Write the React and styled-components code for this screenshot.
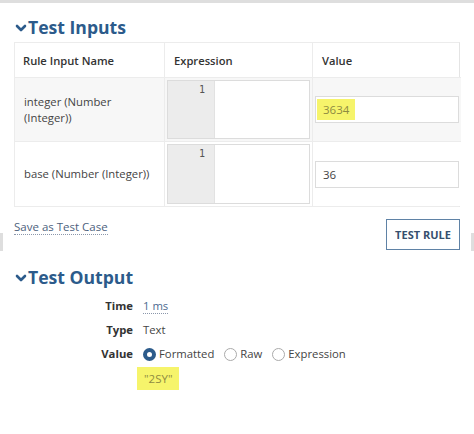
import React from "react"
import styled, { createGlobalStyle } from "styled-components"

const GlobalStyle = createGlobalStyle`
  html, body {
    margin: 0;
    padding: 0;
    background: #fff;
  }
  body {
    font-family: "Open Sans", "Liberation Sans", sans-serif;
    color: #333;
    width: 474px;
    height: 434px;
    overflow: hidden;
  }
`

const Page = styled.div`
  width: 474px;
  height: 434px;
  border-top: 3px solid #dedede;
  box-sizing: border-box;
  padding: 0 14px;
`

const SectionTitle = styled.h2`
  display: flex;
  align-items: center;
  gap: 1px;
  margin: 0;
  padding: ${(p) => p.$pad};
  font-size: 17.6px;
  font-weight: 700;
  color: #2c5b8b;
  line-height: 24px;
`

const Chevron = () => (
  <svg width="12" height="10" viewBox="0 0 12 10" style={{ marginTop: 2 }}>
    <polyline points="2,3 6,7 10,3" fill="none" stroke="#2c5b8b" strokeWidth="2.6" strokeLinecap="round" strokeLinejoin="round" />
  </svg>
)

const Table = styled.div`
  display: grid;
  grid-template-columns: 149px 148px 149px;
  border: 1px solid #ececec;
  border-right: 1px solid #e4e4e4;
  margin-top: 3px;
`

const HeadCell = styled.div`
  height: 34px;
  display: flex;
  align-items: center;
  padding-left: ${(p) => (p.$first ? "8px" : "9px")};
  font-size: 11.2px;
  font-weight: 600;
  color: #333;
  border-left: ${(p) => (p.$first ? "none" : "1px solid #ececec")};
  border-bottom: 1px solid #ececec;
`

const Cell = styled.div`
  height: 64px;
  box-sizing: border-box;
  display: flex;
  align-items: center;
  padding: 2px;
  background: ${(p) => (p.$shade ? "#f7f7f7" : "#fff")};
  border-left: ${(p) => (p.$first ? "none" : "1px solid #ececec")};
  border-bottom: ${(p) => (p.$last ? "none" : "1px solid #ececec")};
`

const NameText = styled.div`
  padding-left: 7px;
  font-size: 11.3px;
  line-height: 16px;
  color: #444;
`

const Editor = styled.div`
  flex: 1;
  align-self: stretch;
  display: flex;
  border: 1px solid #dcdcdc;
  background: #fff;
`

const Gutter = styled.div`
  width: 47px;
  background: #ececec;
  border-right: 1px solid #e2e2e2;
  font-family: "DejaVu Sans Mono", monospace;
  font-size: 10px;
  color: #555;
  text-align: right;
  padding: 3px 9px 0 0;
  box-sizing: border-box;
`

const ValueInput = styled.div`
  flex: 1;
  height: 27px;
  box-sizing: border-box;
  border: 1px solid #dcdcdc;
  background: #fff;
  display: flex;
  align-items: center;
  padding-left: ${(p) => p.$pad || "7px"};
  font-size: 11.5px;
  color: #444;
`

const Marker = styled.span`
  display: inline-flex;
  align-items: center;
  background: #f6f46b;
  color: #8f8b42;
  padding: ${(p) => p.$pad};
  font-size: 11.5px;
`

const Actions = styled.div`
  position: relative;
  display: flex;
  justify-content: space-between;
  align-items: flex-start;
  margin-top: 12px;
  height: 32px;
  &::before,
  &::after {
    content: "";
    position: absolute;
    top: 14px;
    width: 3px;
    height: 18px;
    background: #dedede;
  }
  &::before {
    left: -14px;
  }
  &::after {
    right: -14px;
  }
`

const SaveLink = styled.a`
  font-size: 11.5px;
  color: #4d5f7d;
  text-decoration: none;
  border-bottom: 1px dotted #8b97ab;
  line-height: 15px;
`

const TestButton = styled.button`
  width: 74px;
  height: 31px;
  border: 1px solid #5f82a6;
  background: #fff;
  font-family: "Open Sans", "Liberation Sans", sans-serif;
  font-size: 11px;
  font-weight: 700;
  color: #36506e;
  padding: 0;
`

const OutputGrid = styled.div`
  display: grid;
  grid-template-columns: 119px auto;
  column-gap: 10px;
  row-gap: 6px;
  margin-top: 8px;
  font-size: 11.3px;
  line-height: 18px;
`

const Label = styled.div`
  text-align: right;
  font-weight: 700;
  color: #333;
`

const Value = styled.div`
  display: flex;
  align-items: center;
  color: #444;
`

const TimeLink = styled.span`
  color: #4d6a90;
  border-bottom: 1px dotted #8b97ab;
  line-height: 15px;
`

const Radio = styled.span`
  display: inline-flex;
  align-items: center;
  gap: 3px;
  margin-right: 10px;
  color: #444;
  &::before {
    content: "";
    width: 13px;
    height: 13px;
    box-sizing: border-box;
    border-radius: 50%;
    border: ${(p) => (p.$on ? "4px solid #2c5b8b" : "1px solid #aaa")};
    background: #fff;
  }
`

const ResultRow = styled.div`
  padding: 3px 0 0 123px;
`

const App = () => {
  return (
    <>
      <GlobalStyle />
      <Page>
        <SectionTitle $pad="12px 0 0 1px">
          <Chevron />
          Test Inputs
        </SectionTitle>
        <Table>
          <HeadCell $first>Rule Input Name</HeadCell>
          <HeadCell>Expression</HeadCell>
          <HeadCell>Value</HeadCell>

          <Cell $first $shade>
            <NameText>
              integer (Number
              <br />
              (Integer))
            </NameText>
          </Cell>
          <Cell $shade>
            <Editor>
              <Gutter>1</Gutter>
            </Editor>
          </Cell>
          <Cell $shade>
            <ValueInput $pad="1px">
              <Marker $pad="3px 6px 3px 6px">3634</Marker>
            </ValueInput>
          </Cell>

          <Cell $first $last>
            <NameText>base (Number (Integer))</NameText>
          </Cell>
          <Cell $last>
            <Editor>
              <Gutter>1</Gutter>
            </Editor>
          </Cell>
          <Cell $last>
            <ValueInput>36</ValueInput>
          </Cell>
        </Table>

        <Actions>
          <SaveLink href="#">Save as Test Case</SaveLink>
          <TestButton>TEST RULE</TestButton>
        </Actions>

        <SectionTitle $pad="14px 0 0 1px">
          <Chevron />
          Test Output
        </SectionTitle>
        <OutputGrid>
          <Label>Time</Label>
          <Value>
            <TimeLink>1 ms</TimeLink>
          </Value>
          <Label>Type</Label>
          <Value>Text</Value>
          <Label>Value</Label>
          <Value>
            <Radio $on>Formatted</Radio>
            <Radio>Raw</Radio>
            <Radio>Expression</Radio>
          </Value>
        </OutputGrid>
        <ResultRow>
          <Marker $pad="4px 7px">"2SY"</Marker>
        </ResultRow>
      </Page>
    </>
  )
}

export default App
